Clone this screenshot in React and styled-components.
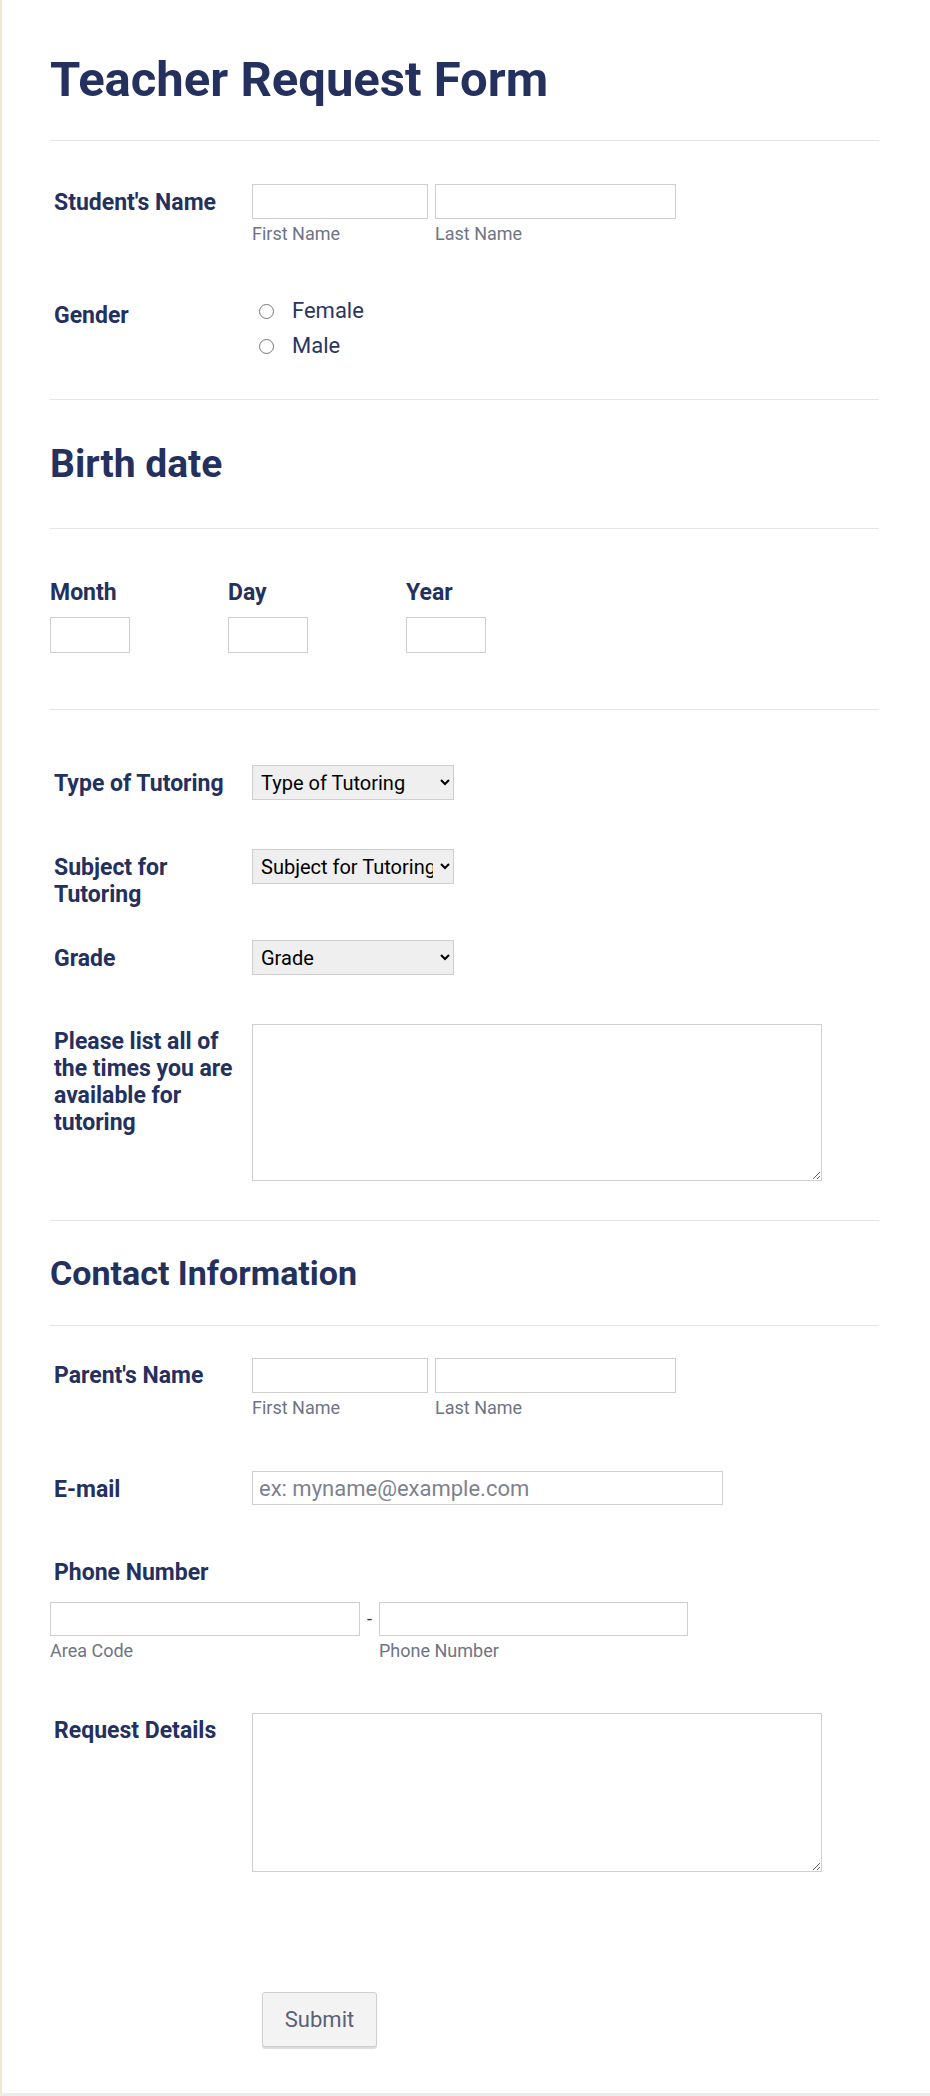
import React from "react";
import styled, { createGlobalStyle } from "styled-components";

const GlobalStyle = createGlobalStyle`
  body {
    margin: 0;
    background: #fff;
    font-family: Roboto, "Liberation Sans", sans-serif;
  }
`;

const Page = styled.div`
  min-height: 2096px;
  box-sizing: border-box;
  border-left: 2px solid #f1e7d3;
  border-bottom: 3px solid #ececec;
  background: #fff;
  padding: 0 51px 0 48px;
`;

const Section = styled.section`
  padding: ${(p) => p.pad || "0"};
  border-bottom: ${(p) => (p.last ? "none" : "1px solid #e5e5e5")};
`;

const Title = styled.h1`
  margin: 0;
  font-size: 49px;
  line-height: 56px;
  font-weight: 700;
  color: #24305e;
`;

const Heading = styled.h2`
  margin: 0;
  font-size: ${(p) => p.size}px;
  line-height: ${(p) => p.lh}px;
  font-weight: 700;
  color: #24305e;
`;

const Field = styled.div`
  display: grid;
  grid-template-columns: 202px 1fr;
  align-items: start;
  margin-top: ${(p) => p.top || 0}px;
`;

const Label = styled.label`
  display: block;
  padding: ${(p) => p.pt ?? 5}px 0 0 ${(p) => p.pl ?? 4}px;
  max-width: 186px;
  font-size: 23px;
  line-height: 27px;
  font-weight: 700;
  color: #24305e;
`;

const Inputs = styled.div`
  display: flex;
  gap: ${(p) => p.gap ?? 7}px;
  align-items: flex-start;
`;

const Col = styled.div`
  display: flex;
  flex-direction: column;
`;

const TextInput = styled.input`
  box-sizing: border-box;
  width: ${(p) => p.w}px;
  height: ${(p) => p.h || 35}px;
  margin: 0;
  padding: 0 6px;
  border: 1px solid #cfcfcf;
  border-radius: 0;
  background: #fff;
  font-family: Roboto, "Liberation Sans", sans-serif;
  font-size: 22px;
  color: #2c3560;
  outline: none;

  &::placeholder {
    color: #7d8190;
  }
`;

const SubLabel = styled.span`
  margin-top: 5px;
  font-size: 18px;
  line-height: 20px;
  color: #6f7484;
`;

const RadioList = styled.div`
  display: flex;
  flex-direction: column;
  gap: 9px;
  padding-left: 7px;
`;

const RadioRow = styled.label`
  display: flex;
  align-items: center;
  gap: 18px;
  font-size: 22px;
  line-height: 26px;
  color: #2c3560;
`;

const Radio = styled.input`
  appearance: none;
  margin: 0;
  width: 15px;
  height: 15px;
  border: 1px solid #767676;
  border-radius: 50%;
  background: #fff;
`;

const DateRow = styled.div`
  display: grid;
  grid-template-columns: repeat(3, 178px);
`;

const TopLabel = styled.label`
  display: block;
  padding-left: ${(p) => p.pl ?? 0}px;
  margin-bottom: ${(p) => p.mb ?? 11}px;
  font-size: 23px;
  line-height: 27px;
  font-weight: 700;
  color: #24305e;
`;

const Select = styled.select`
  box-sizing: border-box;
  width: 202px;
  height: 35px;
  margin: 0;
  padding: 0 4px;
  border: 1px solid #cfcfcf;
  border-radius: 0;
  background-color: #efefef;
  font-family: Roboto, "Liberation Sans", sans-serif;
  font-size: 20px;
  color: #000;
`;

const TextArea = styled.textarea`
  box-sizing: border-box;
  display: block;
  width: 570px;
  height: ${(p) => p.h}px;
  margin: 0;
  border: 1px solid #cfcfcf;
  border-radius: 0;
  background: #fff;
  font-family: Roboto, "Liberation Sans", sans-serif;
  font-size: 18px;
`;

const Block = styled.div`
  margin-top: ${(p) => p.top}px;
`;

const Dash = styled.span`
  width: 19px;
  text-align: center;
  font-size: 18px;
  line-height: 34px;
  color: #2c3560;
`;

const SubmitRow = styled.div`
  margin-top: 120px;
  padding-left: 212px;
`;

const SubmitButton = styled.button`
  width: 115px;
  height: 55px;
  border: 1px solid #cfcfcf;
  border-radius: 3px;
  background: #f3f3f3;
  box-shadow: 0 2px 1px rgba(0, 0, 0, 0.14);
  font-family: Roboto, "Liberation Sans", sans-serif;
  font-size: 22px;
  color: #5a6075;
  cursor: pointer;
`;

const NameInputs = () => (
  <Inputs>
    <Col>
      <TextInput w={176} />
      <SubLabel>First Name</SubLabel>
    </Col>
    <Col>
      <TextInput w={241} />
      <SubLabel>Last Name</SubLabel>
    </Col>
  </Inputs>
);

const App = () => (
  <>
    <GlobalStyle />
    <Page>
      <Section pad="52px 0 32px">
        <Title>Teacher Request Form</Title>
      </Section>

      <Section pad="0 0 40px">
        <Field top={43}>
          <Label>Student's Name</Label>
          <NameInputs />
        </Field>
        <Field top={54}>
          <Label pt={4}>Gender</Label>
          <RadioList>
            <RadioRow>
              <Radio type="radio" name="gender" />
              Female
            </RadioRow>
            <RadioRow>
              <Radio type="radio" name="gender" />
              Male
            </RadioRow>
          </RadioList>
        </Field>
      </Section>

      <Section pad="41px 0 41px">
        <Heading size={39} lh={46}>
          Birth date
        </Heading>
      </Section>

      <Section pad="50px 0 56px">
        <DateRow>
          {["Month", "Day", "Year"].map((part) => (
            <div key={part}>
              <TopLabel>{part}</TopLabel>
              <TextInput w={80} h={36} />
            </div>
          ))}
        </DateRow>
      </Section>

      <Section pad="0 0 39px">
        <Field top={55}>
          <Label>Type of Tutoring</Label>
          <Select defaultValue="">
            <option value="">Type of Tutoring</option>
          </Select>
        </Field>
        <Field top={49}>
          <Label>Subject for Tutoring</Label>
          <Select defaultValue="">
            <option value="">Subject for Tutoring</option>
          </Select>
        </Field>
        <Field top={32}>
          <Label>Grade</Label>
          <Select defaultValue="">
            <option value="">Grade</option>
          </Select>
        </Field>
        <Field top={49}>
          <Label pt={4}>Please list all of the times you are available for tutoring</Label>
          <TextArea h={157} />
        </Field>
      </Section>

      <Section pad="32px 0 32px">
        <Heading size={34} lh={40}>
          Contact Information
        </Heading>
      </Section>

      <Section last>
        <Field top={32}>
          <Label pt={4}>Parent's Name</Label>
          <NameInputs />
        </Field>
        <Field top={53}>
          <Label pt={5}>E-mail</Label>
          <TextInput w={471} h={34} placeholder="ex: myname@example.com" />
        </Field>
        <Block top={54}>
          <TopLabel pl={4} mb={16}>
            Phone Number
          </TopLabel>
          <Inputs gap={0}>
            <Col>
              <TextInput w={310} h={34} />
              <SubLabel>Area Code</SubLabel>
            </Col>
            <Dash>-</Dash>
            <Col>
              <TextInput w={309} h={34} />
              <SubLabel>Phone Number</SubLabel>
            </Col>
          </Inputs>
        </Block>
        <Field top={52}>
          <Label pt={4}>Request Details</Label>
          <TextArea h={159} />
        </Field>
        <SubmitRow>
          <SubmitButton type="button">Submit</SubmitButton>
        </SubmitRow>
      </Section>
    </Page>
  </>
);

export default App;
